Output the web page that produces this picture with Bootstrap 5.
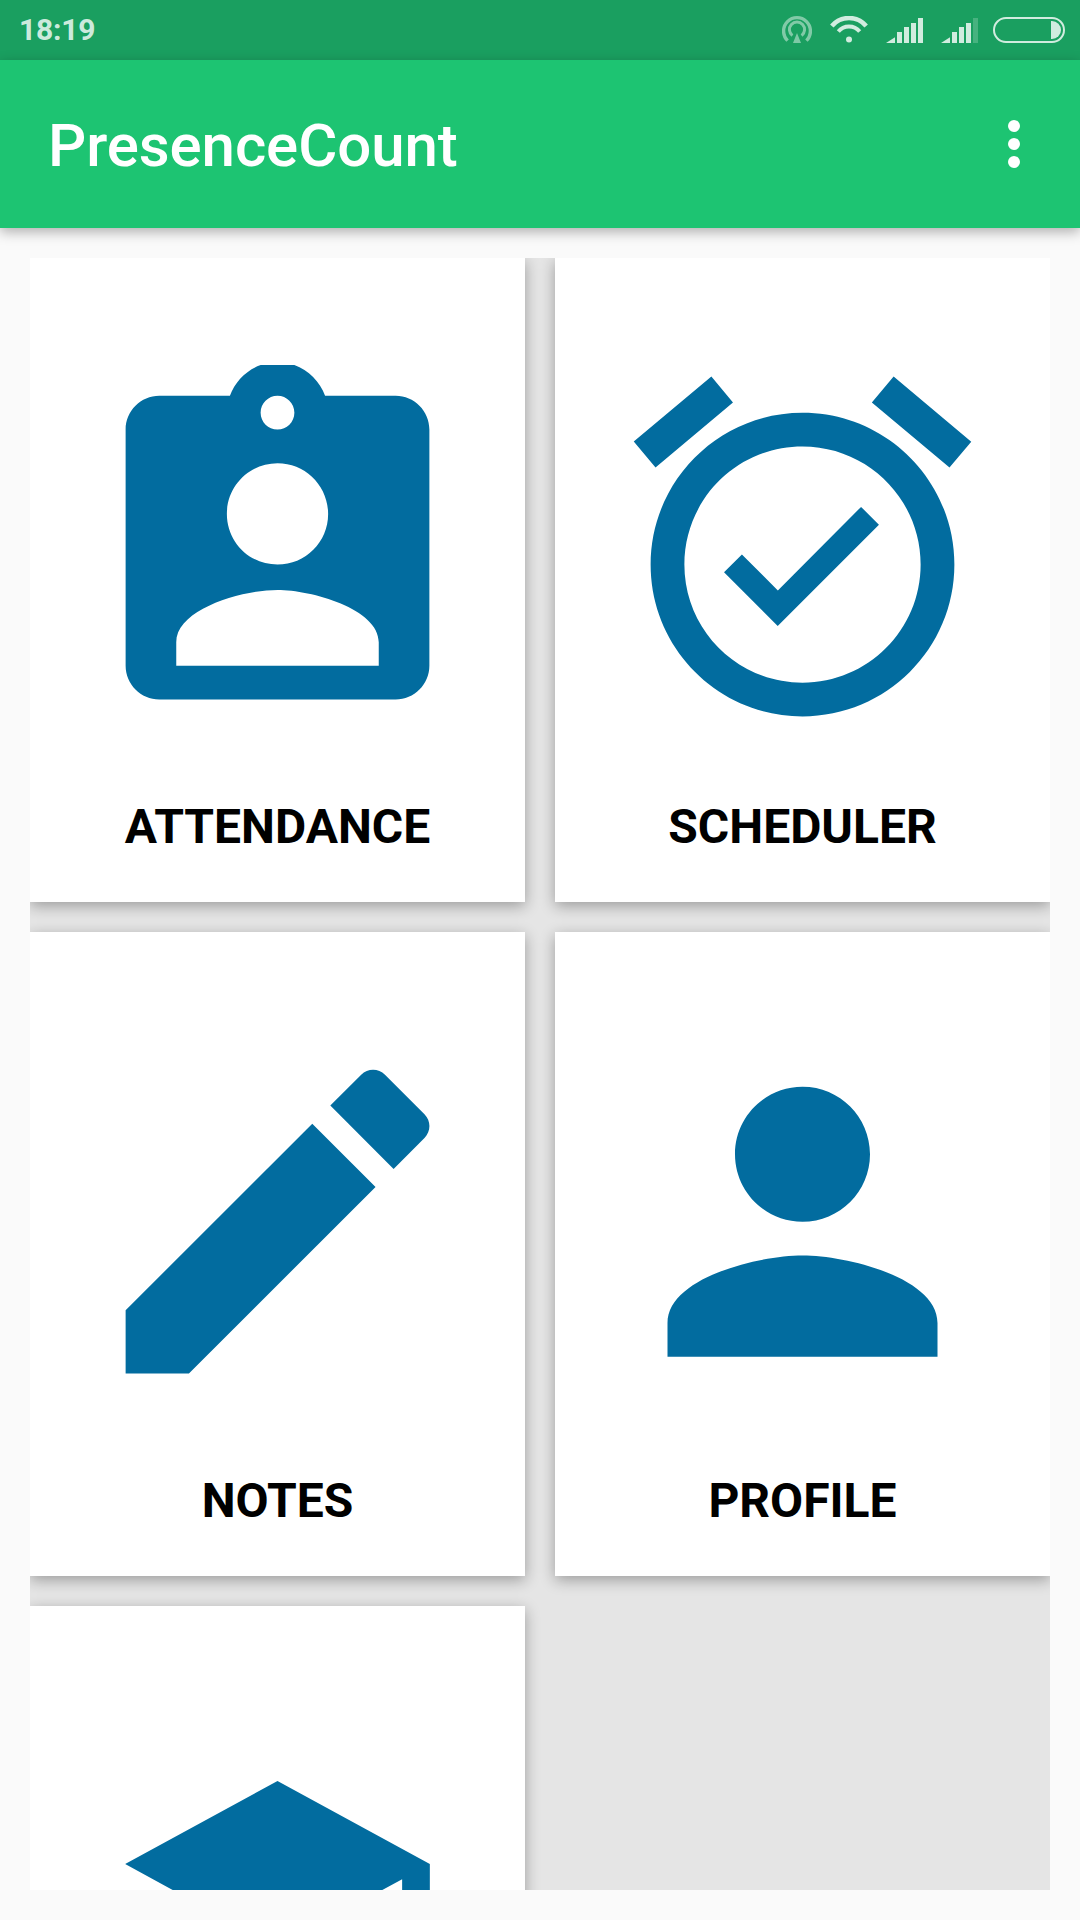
<!DOCTYPE html>
<html lang="en">
  <head>
    <meta charset="UTF-8" />
    <meta name="viewport" content="width=device-width, initial-scale=1.0" />
    <title>PresenceCount</title>
    <link
      href="https://cdn.jsdelivr.net/npm/bootstrap@5.3.0/dist/css/bootstrap.min.css"
      rel="stylesheet"
    />
    <style>
      body {
        background: #fafafa;
        font-family: Roboto, "Liberation Sans", sans-serif;
      }
      .status-strip {
        height: 60px;
        background: #1a9f60;
        padding: 0 15px 0 19px;
      }
      .status-time {
        font-size: 30px;
        font-weight: 700;
        line-height: 1;
        letter-spacing: -0.2px;
        color: rgba(255, 255, 255, 0.8);
      }
      .status-icons {
        gap: 18px;
      }
      .status-icons svg {
        display: block;
        fill: rgba(255, 255, 255, 0.8);
      }
      .status-icons .battery-icon {
        margin-left: -3px;
      }
      .app-strip {
        position: relative;
        z-index: 2;
        height: 168px;
        background: #1dc472;
        padding: 0 60px 0 48px;
        box-shadow: 0 4px 12px rgba(0, 0, 0, 0.3);
      }
      .app-title {
        margin-top: 4px;
        font-size: 60px;
        font-weight: 500;
        line-height: 1;
        letter-spacing: -0.1px;
        color: #fff;
      }
      .more-dots {
        gap: 6px;
      }
      .more-dot {
        width: 12px;
        height: 12px;
        background: #fff;
      }
      .tile-grid {
        height: 1632px;
        margin: 30px 30px 0;
        background: #e5e5e5;
        grid-template-columns: 495px 495px;
        grid-auto-rows: 644px;
        gap: 30px;
      }
      .tile {
        padding-top: 107px;
        background: #fff;
        box-shadow: 0 4px 14px rgba(0, 0, 0, 0.32);
      }
      .tile-icon {
        width: 405px;
        height: 385px;
        fill: #026c9f;
      }
      .tile-label {
        margin-top: 49px;
        font-size: 48px;
        font-weight: 700;
        line-height: 56px;
        color: #000;
      }
    </style>
  </head>
  <body>
    <div class="status-strip d-flex align-items-center justify-content-between">
      <span class="status-time">18:19</span>
      <div class="status-icons d-flex align-items-center">
        <!-- hotspot -->
        <svg width="30" height="30" viewBox="0 1 30 30">
          <g fill="none" stroke="#fff" stroke-opacity=".45">
            <path d="M5.6 26.6a13.4 13.4 0 1 1 18.8 0" stroke-width="3.4" />
            <path d="M10.4 21.6a7.6 7.6 0 1 1 9.2 0" stroke-width="3" />
          </g>
          <path d="M15 19l4 10h-8z" fill-opacity=".55" />
        </svg>
        <!-- wifi -->
        <svg width="38" height="28" viewBox="0 0 38 28">
          <g fill="none" stroke="#fff" stroke-opacity=".8">
            <path d="M1.8 10A22.5 22.5 0 0 1 36.2 10" stroke-width="4.5" />
            <path d="M8.3 15.5A14 14 0 0 1 29.7 15.5" stroke-width="4" />
          </g>
          <circle cx="19" cy="23.5" r="3" />
        </svg>
        <!-- signal -->
        <svg width="37" height="26" viewBox="0 -1 37 26">
          <path d="M0 25l9-5.7V25z" />
          <rect x="11" y="14" width="5" height="11" />
          <rect x="18" y="9" width="5" height="16" />
          <rect x="25" y="5" width="5" height="20" />
          <rect x="32" y="0" width="5" height="25" />
        </svg>
        <svg width="37" height="26" viewBox="0 -1 37 26">
          <path d="M0 25l9-5.7V25z" />
          <rect x="11" y="14" width="5" height="11" />
          <rect x="18" y="9" width="5" height="16" />
          <rect x="25" y="5" width="5" height="20" />
          <rect x="32" y="0" width="5" height="25" fill-opacity=".25" />
        </svg>
        <!-- battery -->
        <svg class="battery-icon" width="72" height="26" viewBox="0 0 72 26">
          <rect x="1" y="1" width="70" height="24" rx="12" fill="none" stroke="#fff" stroke-opacity=".8" stroke-width="2" />
          <path d="M58 4h1a9 9 0 0 1 0 18h-1z" />
        </svg>
      </div>
    </div>
    <div class="app-strip d-flex align-items-center justify-content-between">
      <span class="app-title">PresenceCount</span>
      <div class="more-dots d-flex flex-column">
        <span class="more-dot rounded-circle"></span>
        <span class="more-dot rounded-circle"></span>
        <span class="more-dot rounded-circle"></span>
      </div>
    </div>
    <div class="tile-grid d-grid overflow-hidden">
      <div class="tile card border-0 rounded-0 align-items-center">
        <svg class="tile-icon" viewBox="0 1.18 24 22.8">
          <path d="M19 3h-4.18C14.4 1.84 13.3 1 12 1c-1.3 0-2.4.84-2.82 2H5c-1.1 0-2 .9-2 2v14c0 1.1.9 2 2 2h14c1.1 0 2-.9 2-2V5c0-1.1-.9-2-2-2zm-7 0c.55 0 1 .45 1 1s-.45 1-1 1-1-.45-1-1 .45-1 1-1zm0 4c1.66 0 3 1.34 3 3s-1.34 3-3 3-3-1.34-3-3 1.34-3 3-3zm6 12H6v-1.4c0-2 4-3.1 6-3.1s6 1.1 6 3.1V19z" />
        </svg>
        <div class="tile-label text-center">ATTENDANCE</div>
      </div>
      <div class="tile card border-0 rounded-0 align-items-center">
        <svg class="tile-icon" viewBox="0 1.18 24 22.8">
          <path d="M22 5.72l-4.6-3.86-1.29 1.53 4.6 3.86L22 5.72zM7.88 3.39L6.6 1.86 2 5.71l1.29 1.53 4.59-3.85zM12 4c-4.97 0-9 4.03-9 9s4.02 9 9 9c4.97 0 9-4.03 9-9s-4.03-9-9-9zm0 16c-3.87 0-7-3.13-7-7s3.13-7 7-7 7 3.13 7 7-3.13 7-7 7zm-1.46-5.47L8.41 12.4l-1.06 1.06 3.18 3.18 6-6-1.06-1.06-4.93 4.95z" />
        </svg>
        <div class="tile-label text-center">SCHEDULER</div>
      </div>
      <div class="tile card border-0 rounded-0 align-items-center">
        <svg class="tile-icon" viewBox="0 1.18 24 22.8">
          <path d="M3 17.25V21h3.75L17.81 9.94l-3.75-3.75L3 17.25zM20.71 7.04c.39-.39.39-1.02 0-1.41l-2.34-2.34c-.39-.39-1.02-.39-1.41 0l-1.83 1.83 3.75 3.75 1.83-1.83z" />
        </svg>
        <div class="tile-label text-center">NOTES</div>
      </div>
      <div class="tile card border-0 rounded-0 align-items-center">
        <svg class="tile-icon" viewBox="0 1.18 24 22.8">
          <path d="M12 12c2.21 0 4-1.79 4-4s-1.79-4-4-4-4 1.79-4 4 1.79 4 4 4zm0 2c-2.67 0-8 1.34-8 4v2h16v-2c0-2.66-5.33-4-8-4z" />
        </svg>
        <div class="tile-label text-center">PROFILE</div>
      </div>
      <div class="tile card border-0 rounded-0 align-items-center">
        <svg class="tile-icon" viewBox="-2.62 -1.91 29.24 27.8">
          <path d="M5 13.18v4L12 21l7-3.82v-4L12 17l-7-3.82zM12 3L1 9l11 6 9-4.91V17h2V9L12 3z" />
        </svg>
      </div>
    </div>
  </body>
</html>
